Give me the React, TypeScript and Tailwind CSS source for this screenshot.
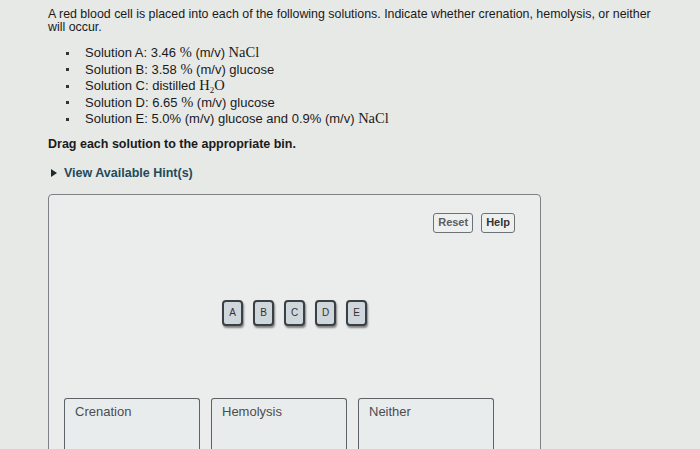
import React from "react";

const serif = { fontFamily: '"Liberation Serif", "Times New Roman", serif' };

function Serif({ children }: { children: React.ReactNode }) {
  return (
    <span className="text-[14.5px]" style={serif}>
      {children}
    </span>
  );
}

function Tile({ l }: { l: string }) {
  return (
    <div className="w-[21px] h-[26px] rounded-[4px] border-2 border-[#3b4045] bg-[#cfd6dc] shadow-[1px_2px_2px_rgba(0,0,0,0.45)] flex items-center justify-center text-[10px] text-[#333]">
      {l}
    </div>
  );
}

function Bin({ label }: { label: string }) {
  return (
    <div className="w-[136px] h-[80px] border-[1.5px] border-b-0 border-[#5d6266] rounded-t-[3px] bg-[#e9ecec] pl-[10px] pt-[3px] text-[13px] text-[#4a4d50]">
      {label}
    </div>
  );
}

export default function App() {
  const items: React.ReactNode[] = [
    <>Solution A: 3.46 <Serif>%</Serif> (m/v) <Serif>NaCl</Serif></>,
    <>Solution B: 3.58 <Serif>%</Serif> (m/v) glucose</>,
    <>Solution C: distilled <Serif>H<sub className="text-[9px]">2</sub>O</Serif></>,
    <>Solution D: 6.65 <Serif>%</Serif> (m/v) glucose</>,
    <>Solution E: 5.0% (m/v) glucose and 0.9% (m/v) <Serif>NaCl</Serif></>,
  ];
  return (
    <div
      className="w-[700px] h-[449px] overflow-hidden bg-[#e7e9e7] text-[#1a1a1a] pl-[48px] pt-[8px]"
      style={{ fontFamily: '"Liberation Sans", Arial, sans-serif' }}
    >
      <p className="text-[12.4px] leading-[13px] w-[640px]">
        A red blood cell is placed into each of the following solutions. Indicate whether crenation, hemolysis, or neither
        <br />
        will occur.
      </p>
      <ul className="mt-[11px] pl-[18px] text-[13px]">
        {items.map((it, i) => (
          <li key={i} className="flex items-center h-[16.5px]">
            <span className="w-[3px] h-[3px] bg-[#333] mr-[16px]" />
            <span>{it}</span>
          </li>
        ))}
      </ul>
      <div className="mt-[8px] text-[12.5px] font-bold leading-[16px]">Drag each solution to the appropriate bin.</div>
      <div className="mt-[13px] flex items-center text-[12.5px] font-bold text-[#234a5a] leading-[16px]">
        <svg width="8" height="10" viewBox="0 0 8 10" className="mr-[6px] ml-[2px]">
          <path d="M1 1 L7 5 L1 9 Z" fill="#1f2a30" />
        </svg>
        View Available Hint(s)
      </div>
      <div className="mt-[13px] w-[493px] h-[320px] border border-[#7b8184] rounded-[4px] bg-[#eaedec] flex flex-col">
        <div className="flex justify-end gap-[8px] pt-[18px] pr-[25px]">
          <button className="h-[20px] px-[4px] border border-[#6d7275] rounded-[3px] bg-[#eef0f0] text-[11px] font-bold text-[#5a5e62]">
            Reset
          </button>
          <button className="h-[20px] px-[4px] border border-[#6d7275] rounded-[3px] bg-[#eef0f0] text-[11px] font-bold text-[#333]">
            Help
          </button>
        </div>
        <div className="flex justify-center gap-[10px] mt-[67px]">
          {["A", "B", "C", "D", "E"].map((l) => (
            <Tile key={l} l={l} />
          ))}
        </div>
        <div className="flex gap-[11px] mt-[72px] pl-[15px]">
          <Bin label="Crenation" />
          <Bin label="Hemolysis" />
          <Bin label="Neither" />
        </div>
      </div>
    </div>
  );
}
